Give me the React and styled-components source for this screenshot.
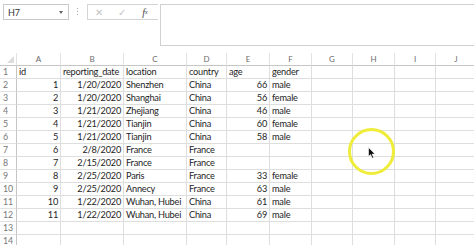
import React from "react";
import styled, { createGlobalStyle } from "styled-components";

const GlobalStyle = createGlobalStyle`
  html, body {
    margin: 0;
    padding: 0;
    background: #ffffff;
    overflow: hidden;
  }
  body {
    font-family: "Lato", "Open Sans", sans-serif;
  }
`;

const Page = styled.div`
  position: relative;
  width: 474px;
  height: 245px;
  overflow: hidden;
  background: #fff;
`;

const FormulaRow = styled.div`
  display: flex;
  align-items: flex-start;
  height: 53px;
  padding-top: 4px;
  box-sizing: border-box;
`;

const NameBox = styled.div`
  display: flex;
  align-items: center;
  justify-content: space-between;
  margin-left: 3px;
  width: 66px;
  height: 16px;
  box-sizing: border-box;
  border: 1px solid #c9c9c9;
  padding: 0 5px 0 4px;
  font-size: 9px;
  color: #333;
`;

const Caret = styled.span`
  width: 0;
  height: 0;
  border-left: 2.5px solid transparent;
  border-right: 2.5px solid transparent;
  border-top: 3px solid #666;
`;

const Dots = styled.div`
  display: flex;
  flex-direction: column;
  gap: 2px;
  margin: 4px 9px 0 8px;
  span {
    width: 1px;
    height: 1px;
    background: #a8a8a8;
  }
`;

const FuncBox = styled.div`
  display: flex;
  align-items: center;
  width: 71px;
  height: 16px;
  box-sizing: border-box;
  border: 1px solid #d4d4d4;
  border-right: none;
`;

const FuncBtn = styled.div`
  width: ${(p) => p.w}px;
  display: flex;
  justify-content: center;
  align-items: center;
  color: ${(p) => p.color || "#c4c4c4"};
  font-size: ${(p) => p.size || 9}px;
  font-family: ${(p) => (p.serif ? '"Liberation Serif", serif' : "inherit")};
  font-style: ${(p) => (p.serif ? "italic" : "normal")};
`;

const FormulaInput = styled.div`
  flex: 1;
  margin-left: 2px;
  height: 42px;
  box-sizing: border-box;
  border: 1px solid #d0d0d0;
  border-right: none;
`;

const Sheet = styled.div`
  display: grid;
  grid-template-columns: 17px 44px 63px 63px 40px 43px 42px 41px 42px 41px 41px;
  grid-auto-rows: 13px;
  font-size: 9.2px;
  letter-spacing: -0.22px;
`;

const Cell = styled.div`
  box-sizing: border-box;
  border-right: 1px solid #dedede;
  border-bottom: 1px solid #dedede;
  padding: 0 2px;
  line-height: 12px;
  white-space: nowrap;
  overflow: visible;
  color: #1e1e1e;
  text-align: ${(p) => (p.num ? "right" : "left")};
`;

const ColHead = styled(Cell)`
  text-align: center;
  color: #6b6b6b;
  font-size: 8px;
  letter-spacing: 0;
  border-right-color: #e2e2e2;
  border-bottom-color: #c6c6c6;
`;

const Corner = styled(ColHead)`
  position: relative;
  &::after {
    content: "";
    position: absolute;
    right: 2px;
    bottom: 2px;
    border-left: 7px solid transparent;
    border-bottom: 7px solid #dcdcdc;
  }
`;

const RowHead = styled(Cell)`
  color: #777;
  font-size: 8.8px;
  letter-spacing: 0;
  text-align: left;
  padding-left: 3px;
  border-right-color: #c6c6c6;
  border-bottom-color: #e2e2e2;
`;

const Highlight = styled.div`
  position: absolute;
  left: 348px;
  top: 128px;
  width: 47px;
  height: 47px;
  box-sizing: border-box;
  border-radius: 50%;
  border: 3px solid #efec3a;
  pointer-events: none;
`;

const Pointer = styled.svg`
  position: absolute;
  left: 368px;
  top: 147px;
`;

const cols = ["A", "B", "C", "D", "E", "F", "G", "H", "I", "J"];

const rows = [
  ["id", "reporting_date", "location", "country", "age", "gender"],
  [1, "1/20/2020", "Shenzhen", "China", 66, "male"],
  [2, "1/20/2020", "Shanghai", "China", 56, "female"],
  [3, "1/21/2020", "Zhejiang", "China", 46, "male"],
  [4, "1/21/2020", "Tianjin", "China", 60, "female"],
  [5, "1/21/2020", "Tianjin", "China", 58, "male"],
  [6, "2/8/2020", "France", "France", "", ""],
  [7, "2/15/2020", "France", "France", "", ""],
  [8, "2/25/2020", "Paris", "France", 33, "female"],
  [9, "2/25/2020", "Annecy", "France", 63, "male"],
  [10, "1/22/2020", "Wuhan, Hubei", "China", 61, "male"],
  [11, "1/22/2020", "Wuhan, Hubei", "China", 69, "male"],
  ["", "", "", "", "", ""],
  ["", "", "", "", "", ""],
];

const isNum = (ci, ri) => ri > 0 && (ci === 0 || ci === 1 || ci === 4);

export default function App() {
  return (
    <Page>
      <GlobalStyle />
      <FormulaRow>
        <NameBox>
          <span>H7</span>
          <Caret />
        </NameBox>
        <Dots>
          <span />
          <span />
          <span />
        </Dots>
        <FuncBox>
          <FuncBtn w={22} size={10}>✕</FuncBtn>
          <FuncBtn w={24} size={10}>✓</FuncBtn>
          <FuncBtn w={22} size={10} serif color="#444">
            f<sub style={{ fontSize: 6 }}>x</sub>
          </FuncBtn>
        </FuncBox>
        <FormulaInput />
      </FormulaRow>
      <Sheet>
        <Corner />
        {cols.map((c) => (
          <ColHead key={c}>{c}</ColHead>
        ))}
        {rows.map((r, ri) => (
          <React.Fragment key={ri}>
            <RowHead>{ri + 1}</RowHead>
            {cols.map((c, ci) => (
              <Cell key={c} num={isNum(ci, ri)}>
                {ci < r.length ? r[ci] : ""}
              </Cell>
            ))}
          </React.Fragment>
        ))}
      </Sheet>
      <Highlight />
      <Pointer width="8" height="12" viewBox="0 0 8 12">
        <path d="M0.5 0.5 L0.5 9.5 L2.6 7.6 L4.2 11.2 L5.6 10.6 L4.1 7.1 L7 7.1 Z" fill="#111" stroke="#fff" strokeWidth="0.6" />
      </Pointer>
    </Page>
  );
}
